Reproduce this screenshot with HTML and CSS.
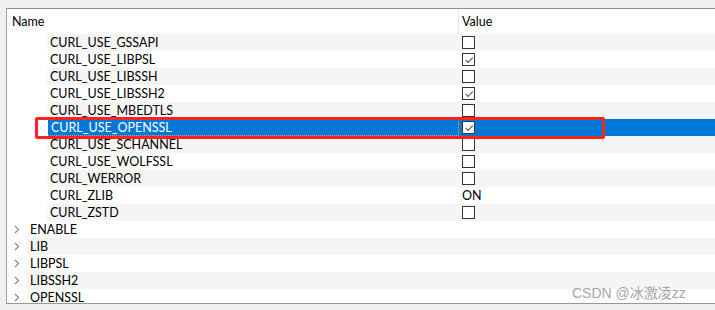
FILE: index.html
```html
<!DOCTYPE html>
<html>
<head>
<meta charset="utf-8">
<link rel="stylesheet" href="styles.css">
</head>
<body>
<div class="tree">
  <div class="header">
    <div class="hcell name-col">Name</div>
    <div class="hcell value-col">Value</div>
  </div>
  <div class="rows">
    <div class="row alt child"><div class="indent"></div><div class="name">CURL_USE_GSSAPI</div><div class="value"><span class="cb"></span></div></div>
    <div class="row child"><div class="indent"></div><div class="name">CURL_USE_LIBPSL</div><div class="value"><span class="cb checked"></span></div></div>
    <div class="row alt child"><div class="indent"></div><div class="name">CURL_USE_LIBSSH</div><div class="value"><span class="cb"></span></div></div>
    <div class="row child"><div class="indent"></div><div class="name">CURL_USE_LIBSSH2</div><div class="value"><span class="cb checked"></span></div></div>
    <div class="row alt child"><div class="indent"></div><div class="name">CURL_USE_MBEDTLS</div><div class="value"><span class="cb"></span></div></div>
    <div class="row sel child"><div class="indent"></div><div class="name focus">CURL_USE_OPENSSL</div><div class="value"><span class="cb checked"></span></div></div>
    <div class="row alt child"><div class="indent"></div><div class="name">CURL_USE_SCHANNEL</div><div class="value"><span class="cb"></span></div></div>
    <div class="row child"><div class="indent"></div><div class="name">CURL_USE_WOLFSSL</div><div class="value"><span class="cb"></span></div></div>
    <div class="row alt child"><div class="indent"></div><div class="name">CURL_WERROR</div><div class="value"><span class="cb"></span></div></div>
    <div class="row child"><div class="indent"></div><div class="name">CURL_ZLIB</div><div class="value">ON</div></div>
    <div class="row alt child"><div class="indent"></div><div class="name">CURL_ZSTD</div><div class="value"><span class="cb"></span></div></div>
    <div class="row group"><div class="indent"><svg class="chev" width="6" height="9" viewBox="0 0 6 9"><polyline points="1,1 4.5,4.5 1,8" fill="none" stroke="#8a8a8a" stroke-width="1.2"/></svg></div><div class="name">ENABLE</div><div class="value"></div></div>
    <div class="row alt group"><div class="indent"><svg class="chev" width="6" height="9" viewBox="0 0 6 9"><polyline points="1,1 4.5,4.5 1,8" fill="none" stroke="#8a8a8a" stroke-width="1.2"/></svg></div><div class="name">LIB</div><div class="value"></div></div>
    <div class="row group"><div class="indent"><svg class="chev" width="6" height="9" viewBox="0 0 6 9"><polyline points="1,1 4.5,4.5 1,8" fill="none" stroke="#8a8a8a" stroke-width="1.2"/></svg></div><div class="name">LIBPSL</div><div class="value"></div></div>
    <div class="row alt group"><div class="indent"><svg class="chev" width="6" height="9" viewBox="0 0 6 9"><polyline points="1,1 4.5,4.5 1,8" fill="none" stroke="#8a8a8a" stroke-width="1.2"/></svg></div><div class="name">LIBSSH2</div><div class="value"></div></div>
    <div class="row group"><div class="indent"><svg class="chev" width="6" height="9" viewBox="0 0 6 9"><polyline points="1,1 4.5,4.5 1,8" fill="none" stroke="#8a8a8a" stroke-width="1.2"/></svg></div><div class="name">OPENSSL</div><div class="value"></div></div>
  </div>
</div>
<div class="highlight"></div>
<div class="watermark">CSDN @冰激凌zz</div>
</body>
</html>
```
FILE: styles.css
```css
html, body {
  margin: 0;
  padding: 0;
  background: #f0f0f0;
  font-family: "Segoe UI", Lato, "Noto Sans", "Liberation Sans", sans-serif;
  font-size: 12.5px;
  color: #000;
}

.tree {
  margin: 8px 0 0 6px;
  height: 294px;
  border-top: 1px solid #8a919b;
  border-left: 1px solid #a0a0a0;
  border-bottom: 1px solid #9098a0;
  background: #fff;
  overflow: hidden;
}

.header {
  display: flex;
  height: 25px;
  align-items: center;
}

.hcell {
  height: 25px;
  line-height: 25px;
  box-sizing: border-box;
}

.header .name-col {
  width: 452px;
  padding-left: 5px;
  border-right: 1px solid #e5e5e5;
}

.header .value-col {
  padding-left: 3px;
}

.row {
  display: flex;
  height: 17px;
  line-height: 17px;
}

.indent {
  flex: none;
  background: #fff;
  position: relative;
}

.child .indent { width: 40px; }
.group .indent { width: 20px; }

.name {
  flex: none;
  box-sizing: border-box;
  padding-left: 3px;
  white-space: nowrap;
}

.child .name { width: 412px; }
.group .name { width: 432px; }

.value {
  flex: 1;
  padding-left: 3px;
  display: flex;
  align-items: center;
}

.row.alt .name,
.row.alt .value { background: #f5f5f5; }

.row.sel .name,
.row.sel .value {
  background: #0078d7;
  color: #fff;
}

.row.sel .indent { border-right: 1px solid #fff; box-sizing: border-box; width: 41px; }
.row.sel .name { width: 411px; }

.name.focus {
  border-right: 1px dotted #e8a040;
  border-bottom: 1px dotted #e8a040;
}

.cb {
  width: 11px;
  height: 11px;
  border: 1px solid #333;
  background: #fff;
  position: relative;
  box-sizing: content-box;
}

.cb.checked::after {
  content: "";
  position: absolute;
  left: 2px;
  top: 1px;
  width: 6px;
  height: 3px;
  border-left: 1.4px solid #505050;
  border-bottom: 1.4px solid #505050;
  transform: rotate(-45deg) translate(-1px, 2px);
  transform-origin: center;
}

.chev {
  position: absolute;
  left: 7px;
  top: 4px;
}

.highlight {
  position: absolute;
  left: 35px;
  top: 117px;
  width: 564px;
  height: 16px;
  border: 3px solid #ff2222;
  border-radius: 2px;
}

.watermark {
  position: absolute;
  left: 572px;
  top: 282px;
  font-family: "Liberation Sans", "Noto Sans CJK SC", sans-serif;
  font-size: 14px;
  color: #a6a6a6;
  white-space: nowrap;
}
```
